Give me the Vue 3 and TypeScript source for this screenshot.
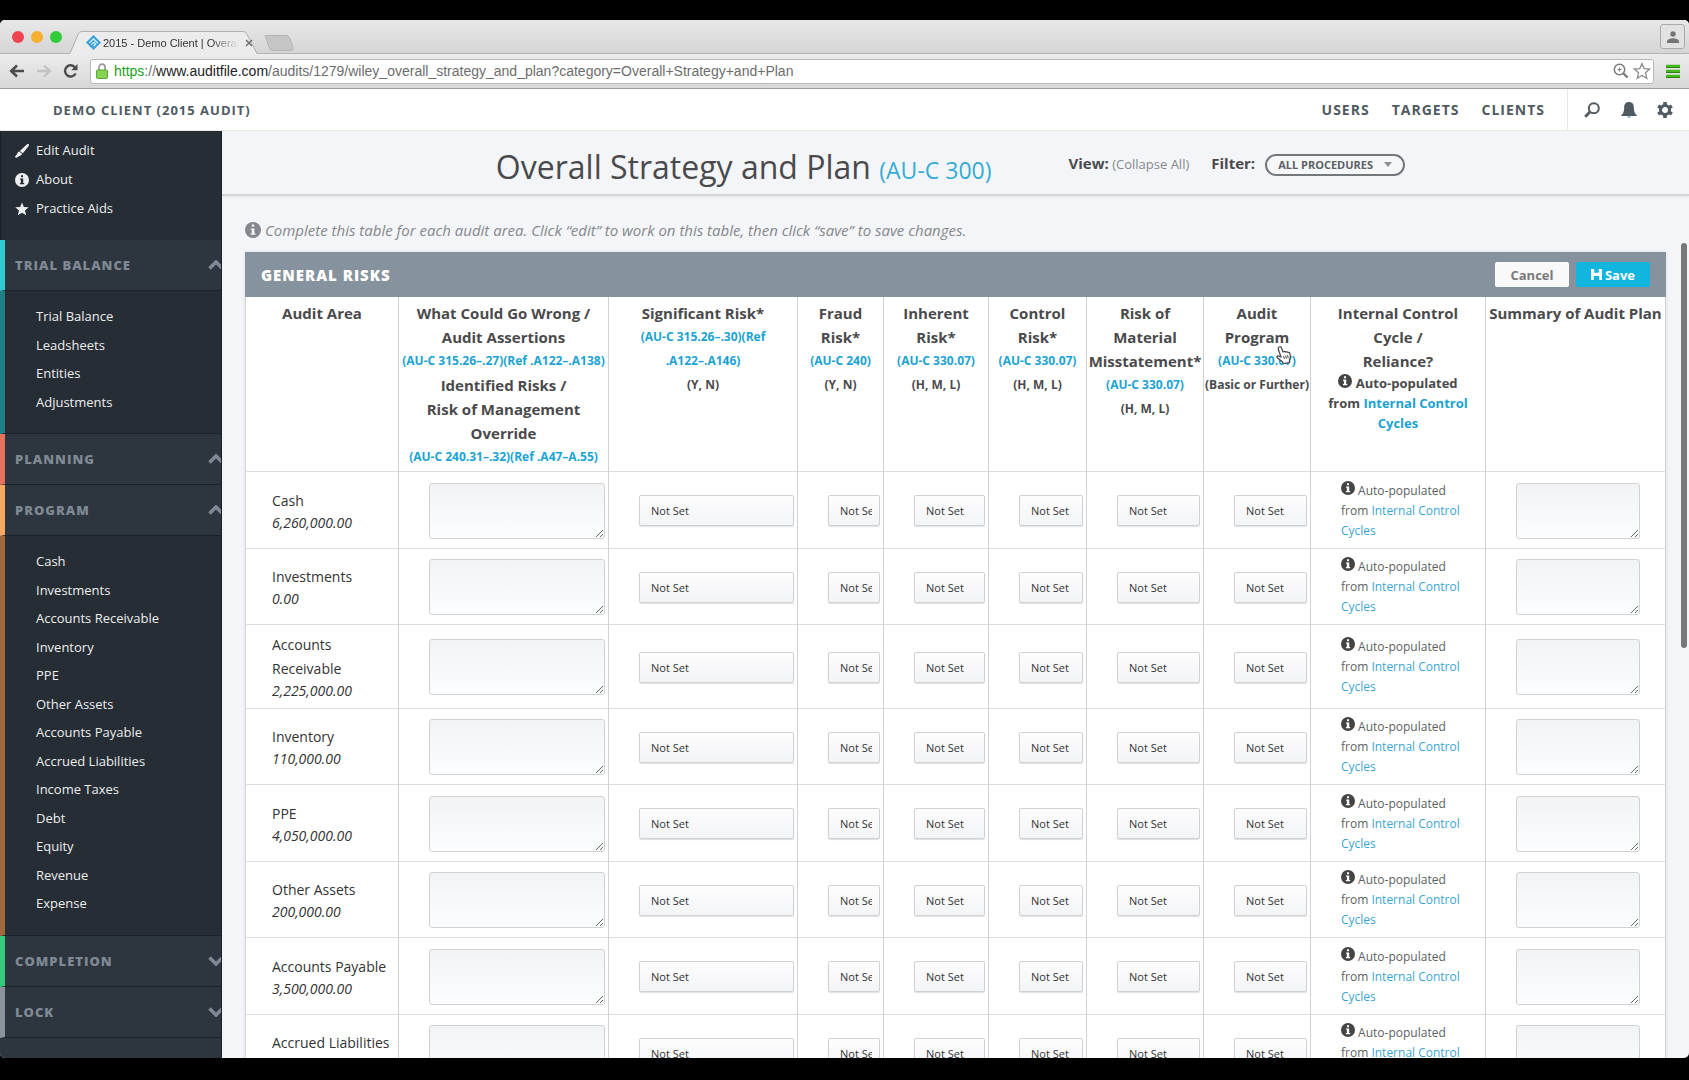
<script setup lang="ts">
import { ref } from 'vue'

interface Section {
  label: string
  tone: string
  open: boolean
  items: string[]
}

interface HeadLine {
  text: string
  kind: 'main' | 'ref' | 'small'
  pointer?: boolean
}

interface Column {
  width: number
  lines: HeadLine[]
  auto?: boolean
}

interface AuditArea {
  name: string
  amount: string
}

const quickLinks = [
  { label: 'Edit Audit', icon: 'brush' },
  { label: 'About', icon: 'info' },
  { label: 'Practice Aids', icon: 'star' },
]

const sections: Section[] = [
  { label: 'Trial Balance', tone: 'teal', open: true, items: ['Trial Balance', 'Leadsheets', 'Entities', 'Adjustments'] },
  { label: 'Planning', tone: 'coral', open: true, items: [] },
  {
    label: 'Program',
    tone: 'orange',
    open: true,
    items: [
      'Cash', 'Investments', 'Accounts Receivable', 'Inventory', 'PPE', 'Other Assets', 'Accounts Payable',
      'Accrued Liabilities', 'Income Taxes', 'Debt', 'Equity', 'Revenue', 'Expense',
    ],
  },
  { label: 'Completion', tone: 'green', open: false, items: [] },
  { label: 'Lock', tone: 'grey', open: false, items: [] },
]

const main = (text: string): HeadLine => ({ text, kind: 'main' })
const refer = (text: string, pointer = false): HeadLine => ({ text, kind: 'ref', pointer })
const small = (text: string): HeadLine => ({ text, kind: 'small' })

const columns: Column[] = [
  { width: 153, lines: [main('Audit Area')] },
  {
    width: 210,
    lines: [
      main('What Could Go Wrong /'), main('Audit Assertions'), refer('(AU-C 315.26–.27)(Ref .A122–.A138)'),
      main('Identified Risks /'), main('Risk of Management'), main('Override'), refer('(AU-C 240.31–.32)(Ref .A47–A.55)'),
    ],
  },
  { width: 189, lines: [main('Significant Risk*'), refer('(AU-C 315.26–.30)(Ref'), refer('.A122–.A146)'), small('(Y, N)')] },
  { width: 86, lines: [main('Fraud'), main('Risk*'), refer('(AU-C 240)'), small('(Y, N)')] },
  { width: 105, lines: [main('Inherent'), main('Risk*'), refer('(AU-C 330.07)'), small('(H, M, L)')] },
  { width: 98, lines: [main('Control'), main('Risk*'), refer('(AU-C 330.07)'), small('(H, M, L)')] },
  { width: 117, lines: [main('Risk of'), main('Material'), main('Misstatement*'), refer('(AU-C 330.07)'), small('(H, M, L)')] },
  { width: 107, lines: [main('Audit'), main('Program'), refer('(AU-C 330.07)', true), small('(Basic or Further)')] },
  { width: 175, lines: [main('Internal Control'), main('Cycle /'), main('Reliance?')], auto: true },
  { width: 180, lines: [main('Summary of Audit Plan')] },
]

const ratings = ['Significant risk', 'Fraud risk', 'Inherent risk', 'Control risk', 'Risk of material misstatement', 'Audit program']

const areas = ref<AuditArea[]>([
  { name: 'Cash', amount: '6,260,000.00' },
  { name: 'Investments', amount: '0.00' },
  { name: 'Accounts Receivable', amount: '2,225,000.00' },
  { name: 'Inventory', amount: '110,000.00' },
  { name: 'PPE', amount: '4,050,000.00' },
  { name: 'Other Assets', amount: '200,000.00' },
  { name: 'Accounts Payable', amount: '3,500,000.00' },
  { name: 'Accrued Liabilities', amount: '' },
])
</script>

<template>
  <div class="screen">
    <svg class="defs" aria-hidden="true">
      <symbol id="i-info" viewBox="0 0 16 16">
        <circle cx="8" cy="8" r="8" fill="currentColor" />
        <path d="M6.8 2.6h2.4v2.2H6.8zM5.8 6.4h3.6v5h1.1v1.4H5.6v-1.4h1.1V7.8h-.9z" fill="var(--hole)" />
      </symbol>
      <symbol id="i-star" viewBox="0 0 16 16">
        <path d="M8 .5l2.1 5.2 5.6.4-4.3 3.6 1.4 5.5L8 12.2l-4.8 3 1.4-5.5L.3 6.100l5.600-.4z" fill="currentColor" />
      </symbol>
      <symbol id="i-brush" viewBox="0 0 16 16">
        <path d="M15.800.3c.6.7.1 1.700-.6 2.600L9 10.700 5.500 8 12.800 1.200c1-.9 2.400-1.600 3-.9zM4.900 8.600l3.200 2.600c-.5 1.500-1.500 2-2.600 2.100L1.800 15.800c-.5.3-1.900-.9-1.600-1.500L2.600 11c.2-1.100 1-2.100 2.300-2.400z" fill="currentColor" />
      </symbol>
    </svg>

    <div class="browser">
      <div class="tabs">
        <div class="lights"><i class="red"></i><i class="amber"></i><i class="lime"></i></div>
        <div class="tab">
          <svg class="tab-shape" viewBox="0 0 194 23" preserveAspectRatio="none" aria-hidden="true">
            <path d="M0 23 8.500 2.500Q9.500.5 12 .5H173Q175.500.5 176.500 2.500L187 23Z" fill="#ececec" />
            <path d="M0 22.500 8.500 2.500Q9.500.5 12 .5H173Q175.500.5 176.500 2.500L187 22.500" fill="none" stroke="#b0b0b0" />
          </svg>
          <svg class="favicon" viewBox="0 0 16 16" aria-hidden="true">
            <path d="M8 0l8 8-8 8-8-8z" fill="#3b9fd8" />
            <path d="M3.500 8.500L8 4l4.500 4.500M5.600 10.500L8.500 7.600l2 2L8 12" fill="none" stroke="#d9effb" stroke-width="1.300" />
          </svg>
          <span class="tab-title">2015 - Demo Client | Overall</span>
          <button class="tab-close" aria-label="Close tab">
            <svg viewBox="0 0 8 8"><path d="M1 1l6 6M7 1L1 7" stroke="#6f6f6f" stroke-width="1.500" /></svg>
          </button>
        </div>
        <button class="new-tab" aria-label="New tab">
          <svg viewBox="0 0 30 16"><path d="M1 .5H22q3 0 4 3l3 9q.8 3-2 3H9q-2.500 0-3.500-2.500z" fill="#c6c6c6" stroke="#b4b4b4" /></svg>
        </button>
        <button class="profile" aria-label="Profile">
          <svg viewBox="0 0 12 12"><circle cx="6" cy="3" r="2.700" fill="#757575" /><path d="M0 12V9.800Q1.500 7.200 6 7.200T12 9.800V12z" fill="#757575" /></svg>
        </button>
      </div>
      <div class="toolbar">
        <button class="tool" aria-label="Back">
          <svg viewBox="0 0 16 14"><path d="M8 1.500L2.200 7 8 12.500M2.500 7H15" fill="none" stroke="#4c4c4c" stroke-width="2.600" /></svg>
        </button>
        <button class="tool" aria-label="Forward">
          <svg viewBox="0 0 16 14"><path d="M8 1.500L13.800 7 8 12.500M13.500 7H1" fill="none" stroke="#c2c2c2" stroke-width="2.400" /></svg>
        </button>
        <button class="tool" aria-label="Reload">
          <svg viewBox="0 0 16 14"><path d="M12.600 9.500A5.600 5.600 0 1 1 12 3.400" fill="none" stroke="#4c4c4c" stroke-width="2.400" /><path d="M14.500 0v6.200H8.300z" fill="#4c4c4c" /></svg>
        </button>
        <div class="address">
          <svg class="lock" viewBox="0 0 12 16" aria-hidden="true">
            <path d="M3 8V4.200a3 3 0 0 1 6 0V8" fill="none" stroke="#9a9a9a" stroke-width="1.700" />
            <rect x=".5" y="7" width="11" height="8.500" rx="1" fill="#86d355" stroke="#5aa832" />
          </svg>
          <span class="url"><span class="secure">https</span>://<span class="host">www.auditfile.com</span>/audits/1279/wiley_overall_strategy_and_plan?category=Overall+Strategy+and+Plan</span>
          <svg class="addr-icon" viewBox="0 0 16 16" aria-hidden="true">
            <circle cx="6.500" cy="6.500" r="5.200" fill="none" stroke="#7b7b7b" stroke-width="1.500" />
            <path d="M10.500 10.500l4 4" stroke="#7b7b7b" stroke-width="2.400" /><path d="M4.500 6.500h4M6.500 4.500v4" stroke="#7b7b7b" />
          </svg>
          <svg class="addr-star" viewBox="0 0 18 18" aria-hidden="true">
            <path d="M9 1.500l2.200 5.100 5.500.5-4.200 3.700 1.300 5.500L9 13.400l-4.800 2.900 1.300-5.500L1.300 7.100l5.500-.5z" fill="none" stroke="#8d8d8d" stroke-width="1.300" />
          </svg>
        </div>
        <button class="menu" aria-label="Menu">
          <svg viewBox="0 0 14 14"><path d="M0 2h14M0 7h14M0 12h14" stroke="#45b81b" stroke-width="2.600" /><path d="M0 3.500h14M0 8.500h14M0 13.500h14" stroke="#2a8010" /></svg>
        </button>
      </div>

      <header class="app-bar">
        <a class="client" href="#">DEMO CLIENT (2015 AUDIT)</a>
        <nav class="top-nav">
          <a href="#">USERS</a><a href="#">TARGETS</a><a href="#">CLIENTS</a>
        </nav>
        <div class="actions">
          <button aria-label="Search">
            <svg viewBox="0 0 16 16"><circle cx="9.800" cy="6.200" r="5" fill="none" stroke="#4f5a61" stroke-width="2" /><path d="M6.200 9.800L1.200 14.800" stroke="#4f5a61" stroke-width="2.800" /></svg>
          </button>
          <button aria-label="Notifications">
            <svg viewBox="0 0 16 16"><path d="M8 0c3.600 0 4.800 2.500 4.800 5.200 0 4.300 1 6.300 3 8.100v.7H.2v-.7c2-1.800 3-3.800 3-8.100C3.200 2.500 4.400 0 8 0z" fill="#4f5a61" /><path d="M6.300 14.300h3.400A1.700 1.700 0 0 1 6.300 14.300z" fill="#7fa8c4" /></svg>
          </button>
          <button aria-label="Settings">
            <svg viewBox="0 0 16 16">
              <circle cx="8" cy="8" r="4.500" fill="none" stroke="#4f5a61" stroke-width="3" />
              <path d="M8 0v3M8 13v3M1.100 4l2.600 1.500M12.300 10.500l2.600 1.500M1.100 12l2.600-1.500M12.300 5.500L14.900 4" stroke="#4f5a61" stroke-width="3.600" />
            </svg>
          </button>
        </div>
      </header>

      <div class="body">
        <aside class="sidebar">
          <ul class="quick">
            <li v-for="q in quickLinks" :key="q.label">
              <a href="#"><svg aria-hidden="true"><use :href="'#i-' + q.icon" /></svg>{{ q.label }}</a>
            </li>
          </ul>
          <section v-for="s in sections" :key="s.label" :class="s.tone">
            <button class="group">
              {{ s.label }}
              <svg :class="{ down: !s.open }" viewBox="0 0 16 10" aria-hidden="true"><path d="M1.500 8.500L8 2l6.500 6.500" fill="none" stroke="currentColor" stroke-width="3.600" /></svg>
            </button>
            <ul v-if="s.items.length" class="items">
              <li v-for="item in s.items" :key="item"><a href="#">{{ item }}</a></li>
            </ul>
          </section>
        </aside>

        <main class="content">
          <div class="title-bar">
            <h1>Overall Strategy and Plan <a href="#">(AU-C 300)</a></h1>
            <div class="view"><b>View:</b> <a href="#">(Collapse All)</a></div>
            <div class="filter">
              <label for="filter">Filter:</label>
              <span class="pill">
                <select id="filter"><option>ALL PROCEDURES</option></select>
                <svg viewBox="0 0 8 5" aria-hidden="true"><path d="M0 0h8L4 5z" fill="#8b9096" /></svg>
              </span>
            </div>
          </div>

          <p class="note">
            <svg aria-hidden="true"><use href="#i-info" /></svg>
            <em>Complete this table for each audit area. Click “edit” to work on this table, then click “save” to save changes.</em>
          </p>

          <section class="panel">
            <div class="panel-head">
              <h2>GENERAL RISKS</h2>
              <button class="cancel">Cancel</button>
              <button class="save">
                <svg viewBox="0 0 12 12" aria-hidden="true"><path d="M0 0h3.500v4h5V0H12v12H9V7.500H3V12H0z" fill="#fff" /></svg>Save
              </button>
            </div>
            <table>
              <colgroup><col v-for="(c, i) in columns" :key="i" :style="{ width: c.width + 'px' }" /></colgroup>
              <thead>
                <tr>
                  <th v-for="(c, i) in columns" :key="i" scope="col">
                    <template v-for="(l, j) in c.lines" :key="j">
                      <a v-if="l.kind === 'ref'" class="line ref" href="#">{{ l.text }}<svg v-if="l.pointer" class="pointer" viewBox="0 0 15 18" aria-hidden="true"><path d="M3.200 1q1.600-.8 2.300 1L7 6l1-.5q1-.3 1.500.6l1-.3q1-.2 1.400.7 1.600-.4 2 1.200l.5 3.500-1 2.800.2 2.500-6.200 1.200-1-2L1.500 12Q.3 10.700 1.300 10t2.600.8L5 11 2.200 3Q1.900 1.500 3.200 1z" fill="#fff" stroke="#444" stroke-width="1.200" /><path d="M7.600 10l.8 3M9.600 9.600l.8 3M11.500 9.200l.7 3" stroke="#444" /></svg></a>
                      <span v-else :class="['line', l.kind]">{{ l.text }}</span>
                    </template>
                    <div v-if="c.auto" class="auto">
                      <svg aria-hidden="true"><use href="#i-info" /></svg> Auto-populated<br />from <a href="#">Internal Control<br />Cycles</a>
                    </div>
                  </th>
                </tr>
              </thead>
              <tbody>
                <tr v-for="a in areas" :key="a.name">
                  <td class="area"><span class="name">{{ a.name }}</span><em>{{ a.amount }}</em></td>
                  <td><textarea :aria-label="'What could go wrong: ' + a.name"></textarea></td>
                  <td v-for="r in ratings" :key="r">
                    <select class="rating" :aria-label="r + ': ' + a.name"><option>Not Set</option></select>
                  </td>
                  <td>
                    <div class="auto">
                      <svg aria-hidden="true"><use href="#i-info" /></svg> Auto-populated<br />from <a href="#">Internal Control<br />Cycles</a>
                    </div>
                  </td>
                  <td class="plan"><textarea :aria-label="'Summary of audit plan: ' + a.name"></textarea></td>
                </tr>
              </tbody>
            </table>
          </section>
          <div class="scroll-thumb"></div>
        </main>
      </div>
    </div>
  </div>
</template>

<style>
body {
  margin: 0;
  background: #000;
}
</style>

<style scoped>
* {
  box-sizing: border-box;
}
.screen {
  height: 100vh;
  padding: 20px 0 22px;
  background: #000;
  font-family: "Open Sans", "Noto Sans", sans-serif;
  color: #4a4a4c;
}
.defs {
  position: absolute;
  width: 0;
  height: 0;
}
.browser {
  display: flex;
  flex-direction: column;
  height: 100%;
  overflow: hidden;
  border-radius: 5px;
  background: #f4f5f8;
}
a {
  color: inherit;
  text-decoration: none;
}
button {
  display: flex;
  align-items: center;
  justify-content: center;
  padding: 0;
  border: 0;
  background: none;
  font-family: inherit;
  color: inherit;
}
svg {
  flex: none;
}
ul {
  margin: 0;
  padding: 0;
  list-style: none;
}

/* window chrome */
.tabs {
  display: flex;
  flex: none;
  align-items: flex-end;
  height: 34px;
  padding: 0 4px 0 12px;
  border-bottom: 1px solid #b4b4b4;
  background: linear-gradient(#e8e8e8, #d5d5d5);
  font-family: "Liberation Sans", sans-serif;
}
.lights {
  display: flex;
  gap: 7px;
  align-self: center;
  width: 58px;
}
.lights i {
  width: 12px;
  height: 12px;
  border-radius: 50%;
}
.red {
  background: #ee4450;
}
.amber {
  background: #f6b02f;
}
.lime {
  background: #30cc3a;
}
.tab {
  position: relative;
  display: flex;
  align-items: center;
  width: 194px;
  height: 23px;
  margin-bottom: -1px;
  padding: 0 14px 0 16px;
}
.tab-shape {
  position: absolute;
  top: 0;
  left: 0;
  width: 100%;
  height: 100%;
}
.favicon {
  position: relative;
  width: 15px;
  height: 15px;
  margin-right: 2px;
}
.tab-title {
  position: relative;
  flex: none;
  width: 142px;
  overflow: hidden;
  font-size: 11px;
  line-height: 16px;
  white-space: nowrap;
  color: #333;
  mask-image: linear-gradient(90deg, #000 108px, transparent 136px);
}
.tab-close {
  position: relative;
}
.tab-close svg {
  width: 8px;
  height: 8px;
}
.new-tab {
  padding-bottom: 2px;
}
.new-tab svg {
  width: 30px;
  height: 16px;
}
.profile {
  align-self: center;
  width: 25px;
  height: 25px;
  margin-left: auto;
  border: 1px solid #a9a9a9;
  border-radius: 3px;
  background: #e2e2e2;
}
.profile svg {
  width: 12px;
  height: 12px;
}
.toolbar {
  display: flex;
  flex: none;
  align-items: center;
  height: 35px;
  padding: 0 9px;
  border-bottom: 1px solid #9f9f9f;
  background: linear-gradient(#ececec, #d8d8d8);
  font-family: "Liberation Sans", sans-serif;
}
.tool {
  width: 16px;
  margin-right: 11px;
}
.tool svg {
  width: 16px;
  height: 14px;
}
.address {
  display: flex;
  flex: 1;
  align-items: center;
  height: 25px;
  padding: 0 2px 0 5px;
  border: 1px solid #b9b9b9;
  border-radius: 3px;
  background: #fff;
}
.lock {
  width: 12px;
  height: 16px;
  margin-right: 6px;
}
.url {
  flex: 1;
  font-size: 14px;
  color: #6d6d6d;
}
.secure {
  color: #1ba01b;
}
.host {
  color: #222;
}
.addr-icon {
  width: 16px;
  height: 16px;
  margin-right: 4px;
}
.addr-star {
  width: 18px;
  height: 18px;
}
.menu {
  margin-left: 12px;
}
.menu svg {
  width: 14px;
  height: 14px;
}

/* application header */
.app-bar {
  display: flex;
  flex: none;
  height: 42px;
  padding-left: 53px;
  border-bottom: 1px solid #e6e8ea;
  background: #fff;
  font-size: 13px;
  font-weight: 700;
  letter-spacing: 1px;
  line-height: 42px;
  color: #4f5a61;
}
.top-nav {
  display: flex;
  gap: 22px;
  margin-left: auto;
  padding-right: 22px;
  font-size: 14px;
}
.actions {
  display: flex;
  align-items: center;
  justify-content: space-between;
  width: 122px;
  padding: 0 16px;
  border-left: 1px solid #e6e8ea;
}
.actions svg {
  width: 16px;
  height: 16px;
}

.body {
  display: flex;
  flex: 1;
  min-height: 0;
}

/* sidebar */
.sidebar {
  flex: none;
  width: 222px;
  overflow: hidden;
  border-right: 1px solid #1a1f25;
  background: #2d353e;
  font-size: 13px;
  color: #eceef0;
}
.quick {
  height: 109px;
  padding-top: 5px;
  border-left: 1px solid #1a1f25;
  background: #262d34;
  --hole: #262d34;
}
.quick a {
  display: flex;
  align-items: center;
  gap: 7px;
  padding-left: 14px;
  line-height: 29px;
}
.quick svg {
  width: 14px;
  height: 14px;
}
.sidebar section {
  --tone: #8b949d;
  --shade: #5b6168;
}
.sidebar .teal {
  --tone: #2fcbd2;
  --shade: #1f7f86;
}
.sidebar .coral {
  --tone: #e8705f;
}
.sidebar .orange {
  --tone: #f8a961;
  --shade: #a0693c;
}
.sidebar .green {
  --tone: #34cb7b;
}
.group {
  justify-content: space-between;
  width: 100%;
  height: 51px;
  padding-left: 10px;
  border-bottom: 1px solid #1c2229;
  border-left: 5px solid var(--tone);
  overflow: hidden;
  font-size: 13px;
  font-weight: 800;
  letter-spacing: 1px;
  text-transform: uppercase;
  color: #7e8993;
}
.group svg {
  width: 16px;
  height: 10px;
  margin-right: -3px;
}
.down {
  transform: rotate(180deg);
}
.items {
  padding: 11px 0 17px 31px;
  border-bottom: 1px solid #1c2229;
  border-left: 5px solid var(--shade);
  background: #262d34;
}
.items li {
  line-height: 29px;
}
.items li:nth-child(even) {
  line-height: 28px;
}

/* main area */
.content {
  position: relative;
  flex: 1;
  min-width: 0;
  overflow: hidden;
}
.title-bar {
  display: flex;
  align-items: center;
  justify-content: center;
  height: 65px;
  padding-right: 10px;
  border-bottom: 2px solid #d3d5d8;
  box-shadow: 0 1px 3px #e2e4e7;
}
h1 {
  margin: 0 77px 0 0;
  padding-top: 12px;
  font-size: 32px;
  font-weight: 400;
  line-height: 44px;
  white-space: nowrap;
}
h1 a {
  font-size: 23px;
  color: #35acd6;
}
.view {
  font-size: 13px;
  white-space: nowrap;
  color: #84888d;
}
.view b,
.filter label {
  font-size: 15px;
  font-weight: 700;
  color: #4a4a4c;
}
.filter {
  display: flex;
  align-items: center;
  margin-left: 22px;
}
.pill {
  position: relative;
  display: flex;
  align-items: center;
  margin-left: 10px;
  padding-top: 4px;
}
.pill select {
  appearance: none;
  width: 140px;
  height: 22px;
  padding: 0 11px;
  border: 2px solid #73787d;
  border-radius: 11px;
  background: #f6f7f9;
  font: 700 11px "Open Sans", sans-serif;
  color: #5c6166;
}
.pill svg {
  position: absolute;
  right: 13px;
  width: 8px;
  height: 5px;
}
.note {
  display: flex;
  align-items: center;
  gap: 4px;
  height: 20px;
  margin: 24px 0 12px 23px;
  font-size: 15px;
  line-height: 20px;
  white-space: nowrap;
  color: #84878b;
  --hole: #f4f5f8;
}
.note svg {
  width: 16px;
  height: 16px;
}
.panel {
  margin: 0 23px;
  background: #fff;
  box-shadow: 0 0 3px #d9dbde;
}
.panel-head {
  display: flex;
  align-items: center;
  height: 45px;
  padding: 0 16px;
  background: #86939e;
}
h2 {
  margin: 0 auto 0 0;
  font-size: 15px;
  font-weight: 800;
  letter-spacing: 1px;
  line-height: 20px;
  color: #fff;
}
.cancel,
.save {
  height: 25px;
  border-radius: 2px;
  font-size: 13px;
  font-weight: 700;
}
.cancel {
  width: 74px;
  margin-right: 7px;
  background: #f9f9f9;
  color: #7a7a7a;
}
.save {
  gap: 3px;
  width: 74px;
  background: #11b5dd;
  color: #fff;
}
.save svg {
  width: 11px;
  height: 11px;
}
table {
  width: 100%;
  border-left: 1px solid #d5d7d9;
  border-spacing: 0;
  table-layout: fixed;
}
th,
td {
  border-right: 1px solid #d0d2d5;
  border-bottom: 1px solid #dcdee0;
}
th {
  height: 175px;
  padding: 4px 0 0;
  vertical-align: top;
  font-size: 15px;
  font-weight: 700;
}
.line {
  position: relative;
  display: block;
  line-height: 24px;
  white-space: nowrap;
}
.ref,
.small {
  font-size: 12px;
}
.ref,
.auto a {
  color: #1ba3d3;
}
.pointer {
  position: absolute;
  top: -3px;
  right: 19px;
  width: 15px;
  height: 18px;
}
.auto {
  font-size: 12px;
  line-height: 20px;
  white-space: nowrap;
  --hole: #fff;
}
th .auto {
  font-size: 13px;
}
td .auto {
  color: #5c5f62;
}
td .auto a {
  color: #3aa5d2;
}
.auto svg {
  width: 14px;
  height: 14px;
  color: #444;
}
td {
  height: 77px;
  padding: 8px 3px 7px 30px;
}
tr:nth-child(even) td {
  height: 76px;
}
td.area {
  padding-right: 0;
  padding-left: 26px;
  font-size: 14px;
}
td.plan {
  padding-right: 25px;
}
.name,
.area em {
  display: block;
  color: #333;
}
.name {
  line-height: 24px;
}
.area em {
  height: 20px;
  line-height: 20px;
}
textarea {
  display: block;
  width: 100%;
  height: 56px;
  border: 1px solid #cfd1d4;
  border-radius: 3px;
  background: linear-gradient(#f2f3f5, #fcfdfe);
  resize: both;
}
.rating {
  appearance: none;
  display: block;
  width: 100%;
  height: 31px;
  padding: 0 7px 0 11px;
  border: 1px solid #cfd1d5;
  border-radius: 2px;
  background: linear-gradient(#fdfdfe, #f3f4f6);
  box-shadow: 0 1px 1px #dfe0e2;
  font: 11px "Open Sans", sans-serif;
  color: #333;
}
.scroll-thumb {
  position: absolute;
  top: 112px;
  right: 2px;
  width: 6px;
  height: 405px;
  border-radius: 3px;
  background: #77787b;
}
</style>
